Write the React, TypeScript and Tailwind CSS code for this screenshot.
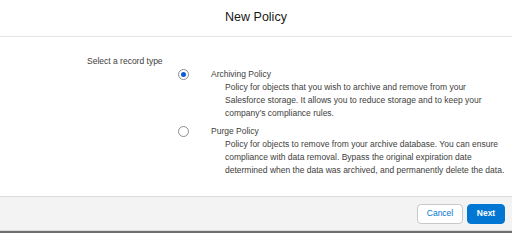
import React from "react";

function Radio({ checked }: { checked?: boolean }) {
  return (
    <div className="w-[11px] h-[11px] rounded-full border border-[#8c8c8c] bg-white flex items-center justify-center shrink-0">
      {checked ? <div className="w-[5px] h-[5px] rounded-full bg-[#0b5cd5]" /> : null}
    </div>
  );
}

function Option({
  checked,
  label,
  lines,
}: {
  checked?: boolean;
  label: string;
  lines: string[];
}) {
  return (
    <div className="flex flex-col">
      <div className="flex items-center h-[13px]">
        <div className="w-[33px]">
          <Radio checked={checked} />
        </div>
        <span className="text-[#3e3e3c]">{label}</span>
      </div>
      <div className="pl-[47px] text-[#3e3e3c]">
        {lines.map((l, i) => (
          <div key={i} className="h-[13px] whitespace-nowrap">
            {l}
          </div>
        ))}
      </div>
    </div>
  );
}

export default function App() {
  return (
    <div
      className="w-[512px] h-[233px] bg-white flex flex-col overflow-hidden"
      style={{ fontFamily: '"Liberation Sans", Arial, sans-serif' }}
    >
      <div className="h-[37px] border-b border-[#e5e5e5] flex items-center justify-center shrink-0">
        <span className="text-[12.5px] text-[#181818] pb-[1px]">New Policy</span>
      </div>
      <div className="flex-1 pt-[17.5px] text-[8.5px] leading-[13px]">
        <div className="pl-[87px] h-[13px] text-[#3e3e3c]">Select a record type</div>
        <div className="pl-[178px] flex flex-col gap-[5px]">
          <Option
            checked
            label="Archiving Policy"
            lines={[
              "Policy for objects that you wish to archive and remove from your",
              "Salesforce storage. It allows you to reduce storage and to keep your",
              "company’s compliance rules.",
            ]}
          />
          <Option
            label="Purge Policy"
            lines={[
              "Policy for objects to remove from your archive database. You can ensure",
              "compliance with data removal. Bypass the original expiration date",
              "determined when the data was archived, and permanently delete the data.",
            ]}
          />
        </div>
      </div>
      <div className="shrink-0 border-t border-[#dddbda] bg-[#f3f3f3] h-[35px] flex items-center justify-end pr-[7px] gap-[4px] border-b border-b-[#d8d8d8]">
        <button className="h-[20px] w-[46px] rounded-[4px] border border-[#c9c9c9] bg-white text-[#0176d3] text-[8.5px]">
          Cancel
        </button>
        <button className="h-[20px] w-[38px] rounded-[4px] border border-[#0176d3] bg-[#0176d3] text-white text-[8.5px] font-semibold">
          Next
        </button>
      </div>
      <div className="h-[2px] bg-[#6e6e6e] shrink-0" />
    </div>
  );
}
